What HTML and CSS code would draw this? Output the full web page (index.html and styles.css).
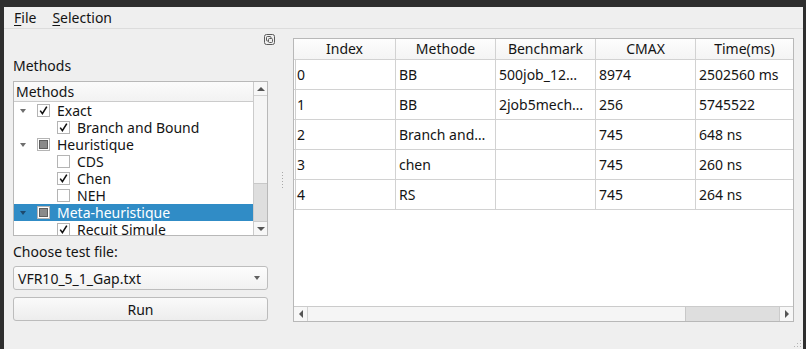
FILE: index.html
```html
<!DOCTYPE html>
<html>
<head>
<meta charset="utf-8">
<link rel="stylesheet" href="styles.css">
</head>
<body>
<div class="window">
  <div class="menubar">
    <span class="menu"><u>F</u>ile</span>
    <span class="menu"><u>S</u>election</span>
  </div>
  <div class="main">
    <div class="dock">
      <div class="dock-title">
        <svg class="float-icon" width="11" height="11" viewBox="0 0 11 11"><rect x="0.5" y="0.5" width="10" height="10" rx="2" fill="none" stroke="#5a5a5a"/><rect x="2.5" y="2.5" width="4.5" height="4.5" rx="1" fill="none" stroke="#5a5a5a"/><rect x="4.5" y="4.5" width="4" height="4" rx="1" fill="#efefef" stroke="#5a5a5a"/></svg>
      </div>
      <div class="label">Methods</div>
      <div class="tree">
        <div class="tree-main">
          <div class="tree-header">Methods</div>
          <div class="rows">
            <div class="row top"><span class="exp"><i class="tri"></i></span><span class="cb"><svg width="13" height="13" viewBox="0 0 13 13"><path d="M3.2 6.6 L5.4 9.6 L9.8 2.6" fill="none" stroke="#111" stroke-width="1.6"/></svg></span><span class="txt">Exact</span></div>
            <div class="row child"><span class="cb"><svg width="13" height="13" viewBox="0 0 13 13"><path d="M3.2 6.6 L5.4 9.6 L9.8 2.6" fill="none" stroke="#111" stroke-width="1.6"/></svg></span><span class="txt">Branch and Bound</span></div>
            <div class="row top"><span class="exp"><i class="tri"></i></span><span class="cb partial"><i></i></span><span class="txt">Heuristique</span></div>
            <div class="row child"><span class="cb"></span><span class="txt">CDS</span></div>
            <div class="row child"><span class="cb"><svg width="13" height="13" viewBox="0 0 13 13"><path d="M3.2 6.6 L5.4 9.6 L9.8 2.6" fill="none" stroke="#111" stroke-width="1.6"/></svg></span><span class="txt">Chen</span></div>
            <div class="row child"><span class="cb"></span><span class="txt">NEH</span></div>
            <div class="row top sel"><span class="exp"><i class="tri"></i></span><span class="cb partial"><i></i></span><span class="txt">Meta-heuristique</span></div>
            <div class="row child"><span class="cb"><svg width="13" height="13" viewBox="0 0 13 13"><path d="M3.2 6.6 L5.4 9.6 L9.8 2.6" fill="none" stroke="#111" stroke-width="1.6"/></svg></span><span class="txt">Recuit Simule</span></div>
          </div>
        </div>
        <div class="vscroll">
          <div class="sbtn up"><i class="tri-up"></i></div>
          <div class="track"><div class="handle"></div></div>
          <div class="sbtn down"><i class="tri"></i></div>
        </div>
      </div>
      <div class="label2">Choose test file:</div>
      <div class="combo"><span>VFR10_5_1_Gap.txt</span><i class="tri combo-tri"></i></div>
      <div class="run">Run</div>
    </div>
    <div class="splitter"><span class="dots"></span></div>
    <div class="tablewrap">
      <div class="table">
        <div class="thead">
          <div class="th">Index</div>
          <div class="th">Methode</div>
          <div class="th">Benchmark</div>
          <div class="th">CMAX</div>
          <div class="th last">Time(ms)</div>
        </div>
        <div class="tbody">
          <div class="tr"><div class="td">0</div><div class="td">BB</div><div class="td">500job_12…</div><div class="td">8974</div><div class="td last">2502560 ms</div></div>
          <div class="tr"><div class="td">1</div><div class="td">BB</div><div class="td">2job5mech…</div><div class="td">256</div><div class="td last">5745522</div></div>
          <div class="tr"><div class="td">2</div><div class="td">Branch and…</div><div class="td"></div><div class="td">745</div><div class="td last">648 ns</div></div>
          <div class="tr"><div class="td">3</div><div class="td">chen</div><div class="td"></div><div class="td">745</div><div class="td last">260 ns</div></div>
          <div class="tr"><div class="td">4</div><div class="td">RS</div><div class="td"></div><div class="td">745</div><div class="td last">264 ns</div></div>
        </div>
        <div class="hscroll">
          <div class="hbtn left"><i class="tri-left"></i></div>
          <div class="htrack"><div class="hhandle"></div></div>
          <div class="hbtn right"><i class="tri-right"></i></div>
        </div>
      </div>
    </div>
  </div>
  <svg class="grip" width="9" height="9" viewBox="0 0 9 9"><g fill="#b4b4b4"><rect x="7" y="1" width="1" height="1"/><rect x="4" y="4" width="1" height="1"/><rect x="7" y="4" width="1" height="1"/><rect x="1" y="7" width="1" height="1"/><rect x="4" y="7" width="1" height="1"/><rect x="7" y="7" width="1" height="1"/></g></svg>
</div>
</body>
</html>
```

FILE: styles.css
```css
* { box-sizing: border-box; }

body {
  margin: 0;
  width: 806px;
  height: 349px;
  overflow: hidden;
  background: #2e2e2e;
  font-family: "Noto Sans", "Open Sans", sans-serif;
  font-size: 14px;
  color: #141414;
}

.window {
  margin: 7px 3px 0 4px;
  height: 342px;
  background: #efefef;
  display: flex;
  flex-direction: column;
  position: relative;
}

.menubar {
  height: 22px;
  border-bottom: 1px solid #dcdcdc;
  display: flex;
  align-items: center;
  padding-left: 10px;
  gap: 16px;
}

.menu u { text-decoration-thickness: 1px; text-underline-offset: 2px; }

.main {
  flex: 1;
  display: flex;
}

.dock {
  width: 272px;
  padding: 0 8px 0 9px;
  display: flex;
  flex-direction: column;
}

.dock-title {
  height: 21px;
  display: flex;
  justify-content: flex-end;
  align-items: flex-start;
  padding-top: 5px;
  margin-right: -7px;
}

.label {
  height: 31px;
  display: flex;
  align-items: center;
}

.tree {
  height: 155px;
  border: 1px solid #b8b8b8;
  background: #fff;
  display: flex;
  overflow: hidden;
}

.tree-main {
  flex: 1;
  min-width: 0;
  display: flex;
  flex-direction: column;
}

.tree-header {
  height: 20px;
  flex: none;
  border-bottom: 1px solid #cbcbcb;
  background: linear-gradient(#fbfbfb, #f2f2f2);
  padding-left: 2px;
  line-height: 19px;
}

.rows {
  flex: 1;
  overflow: hidden;
}

.row {
  height: 17px;
  line-height: 17px;
  display: flex;
  align-items: center;
  white-space: nowrap;
  overflow: hidden;
}

.row.sel {
  background: #308cc6;
  color: #fff;
}

.row.child { padding-left: 43px; }

.exp {
  width: 23px;
  height: 17px;
  display: flex;
  align-items: center;
  padding-left: 6px;
}

.tri {
  display: block;
  width: 0;
  height: 0;
  border-left: 3.5px solid transparent;
  border-right: 3.5px solid transparent;
  border-top: 4px solid #6e6e6e;
}

.row.sel .tri { border-top-color: #1d4a6e; }

.cb {
  width: 13px;
  height: 13px;
  flex: none;
  border: 1px solid #b4b4b4;
  background: #fff;
  margin-right: 7px;
  display: flex;
  align-items: center;
  justify-content: center;
  position: relative;
}

.cb svg {
  position: absolute;
  left: -1px;
  top: -1px;
}

.cb.partial i {
  display: block;
  width: 9px;
  height: 9px;
  background: #8a8a8a;
  border: 1px solid #5e5e5e;
}

.vscroll {
  width: 14px;
  flex: none;
  border-left: 1px solid #cbcbcb;
  background: #f5f5f5;
  display: flex;
  flex-direction: column;
}

.sbtn {
  height: 14px;
  flex: none;
  display: flex;
  align-items: center;
  justify-content: center;
  background: #f7f7f7;
}

.sbtn.up { border-bottom: 1px solid #d2d2d2; }
.sbtn.down { border-top: 1px solid #cbcbcb; }

.tri-up {
  display: block;
  width: 0;
  height: 0;
  border-left: 4px solid transparent;
  border-right: 4px solid transparent;
  border-bottom: 4px solid #555;
}

.sbtn.down .tri {
  border-left-width: 4px;
  border-right-width: 4px;
  border-top-color: #555;
}

.track {
  flex: 1;
  display: flex;
  flex-direction: column;
  justify-content: flex-end;
}

.handle {
  height: 38px;
  background: #dedede;
  border-top: 1px solid #c8c8c8;
}

.label2 {
  height: 30px;
  display: flex;
  align-items: center;
}

.combo {
  height: 24px;
  border: 1px solid #bdbdbd;
  border-radius: 3px;
  background: linear-gradient(#fcfcfc, #f1f1f1);
  display: flex;
  align-items: center;
  justify-content: space-between;
  padding: 0 7px 0 4px;
}

.combo-tri {
  border-left-width: 3.5px;
  border-right-width: 3.5px;
  border-top-color: #606060;
}

.run {
  margin-top: 7px;
  height: 24px;
  border: 1px solid #bcbcbc;
  border-radius: 3px;
  background: linear-gradient(#fafafa, #ededed);
  display: flex;
  align-items: center;
  justify-content: center;
}

.splitter {
  width: 17px;
  padding-left: 6px;
  padding-top: 143px;
}

.dots {
  display: block;
  width: 1px;
  height: 18px;
  background: repeating-linear-gradient(#a8a8a8 0 1px, transparent 1px 3px);
}

.tablewrap {
  width: 501px;
  padding-top: 9px;
}

.table {
  height: 284px;
  border: 1px solid #b8b8b8;
  background: #fff;
  display: flex;
  flex-direction: column;
}

.thead, .tr {
  display: grid;
  grid-template-columns: 102px 100px 100px 100px 1fr;
}

.th {
  height: 21px;
  line-height: 20px;
  text-align: center;
  border-right: 1px solid #d2d2d2;
  border-bottom: 1px solid #d2d2d2;
  background: linear-gradient(#fdfdfd, #f4f4f4);
}

.th.last, .td.last { border-right: none; }

.tbody {
  flex: 1;
}

.td {
  height: 30px;
  line-height: 29px;
  padding-left: 3px;
  border-right: 1px solid #d2d2d2;
  border-bottom: 1px solid #d2d2d2;
  white-space: nowrap;
  overflow: hidden;
}

.tr .td:first-child {
  box-shadow: inset 1px 0 0 #fff, inset 2px 0 0 #cfcfcf;
}

.hscroll {
  height: 15px;
  border-top: 1px solid #cbcbcb;
  background: #f5f5f5;
  display: flex;
}

.hbtn {
  width: 14px;
  flex: none;
  display: flex;
  align-items: center;
  justify-content: center;
  background: #f7f7f7;
}

.hbtn.left { border-right: 1px solid #d2d2d2; }
.hbtn.right { border-left: 1px solid #cbcbcb; }

.tri-left {
  display: block;
  width: 0;
  height: 0;
  border-top: 4px solid transparent;
  border-bottom: 4px solid transparent;
  border-right: 4px solid #555;
}

.tri-right {
  display: block;
  width: 0;
  height: 0;
  border-top: 4px solid transparent;
  border-bottom: 4px solid transparent;
  border-left: 4px solid #555;
}

.htrack {
  flex: 1;
  display: flex;
  justify-content: flex-end;
}

.hhandle {
  width: 94px;
  background: #dedede;
  border-left: 1px solid #c8c8c8;
}

.grip {
  position: absolute;
  right: 1px;
  bottom: 1px;
}
```
